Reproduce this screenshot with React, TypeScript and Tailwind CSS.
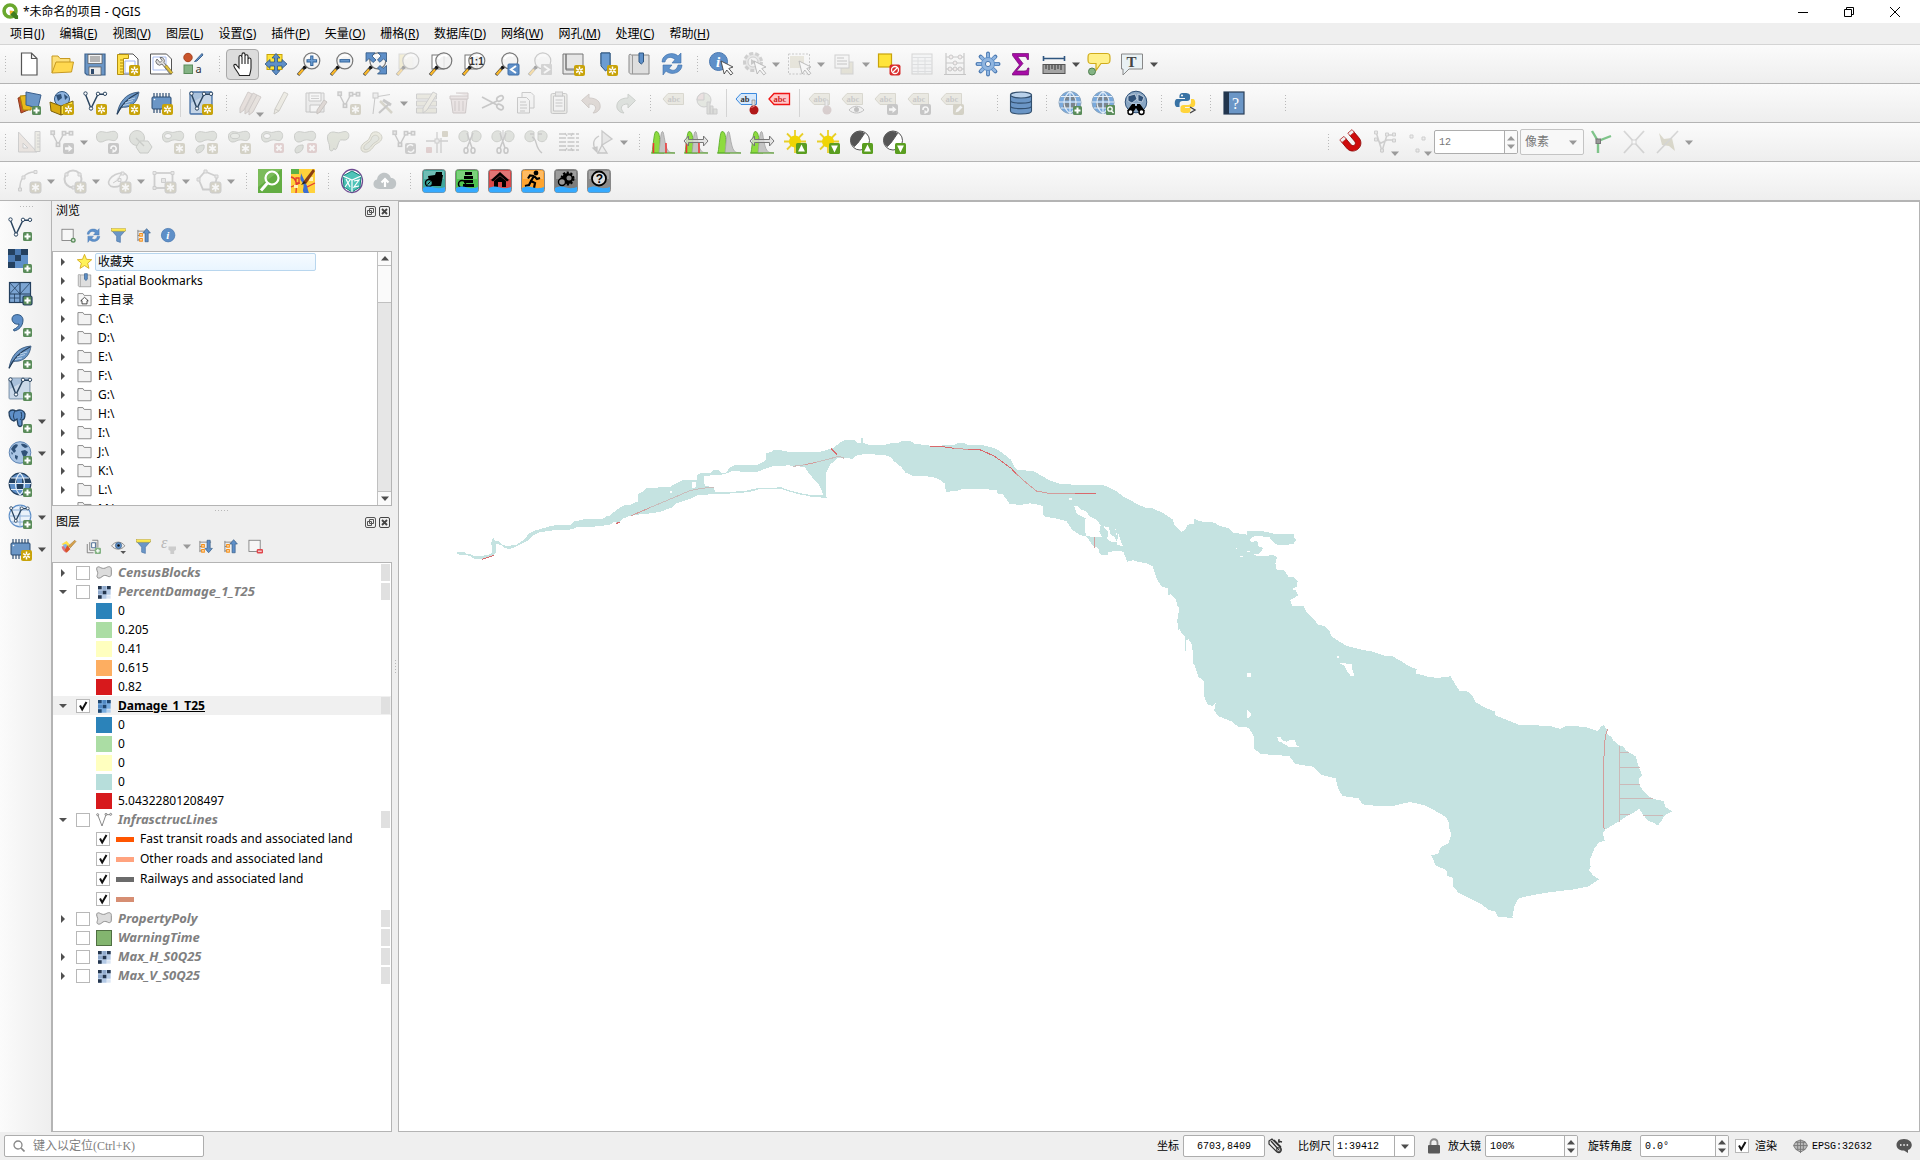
import React from "react";

type IconMap = Record<string, React.ReactNode>;

/* ---------- badges laid over the lower right of an icon ---------- */
const starBadge = (
  <g>
    <rect x="13" y="13" width="11" height="11" rx="2" fill="#c8a30a" />
    <path d="M18.5 14.6v7.8M15.1 16.6l6.8 3.9M21.9 16.6l-6.8 3.9" stroke="#fff" strokeWidth="1.5" />
    <circle cx="18.5" cy="18.5" r="1" fill="#c8a30a" />
  </g>
);
const greyStar = (
  <g>
    <rect x="13" y="13" width="11" height="11" rx="2" fill="#9d9676" />
    <path d="M18.5 14.6v7.8M15.1 16.6l6.8 3.9M21.9 16.6l-6.8 3.9" stroke="#fff" strokeWidth="1.7" />
  </g>
);
const plusBadge = (
  <g>
    <rect x="15" y="15" width="9" height="9" rx="1.5" fill="#5a8c5a" />
    <path d="M19.5 16.5v6M16.5 19.5h6" stroke="#fff" strokeWidth="2" />
  </g>
);
const arrowBadge = (
  <g>
    <rect x="13" y="13" width="11" height="11" rx="2" fill="#777" />
    <path d="M15 17.3h3.5v-2.3l4 3.5-4 3.5v-2.3H15z" fill="#fff" />
  </g>
);
const turnBadge = (
  <g>
    <rect x="13" y="13" width="11" height="11" rx="2" fill="#777" />
    <path d="M16 19a2.6 2.6 0 1 1 3.6 2" stroke="#fff" strokeWidth="1.6" fill="none" />
    <path d="M17.6 18.8l3.2 2.6-3.4 1.6z" fill="#fff" />
  </g>
);
const crossBadge = (
  <g>
    <rect x="14" y="13" width="10" height="10" rx="2" fill="#c09090" />
    <path d="M16.5 15.5l5 5M21.5 15.5l-5 5" stroke="#fff" strokeWidth="2" />
  </g>
);
const upBadge = (
  <g>
    <rect x="13" y="13" width="11" height="11" rx="1.5" fill="#5a9e20" />
    <path d="M18.5 14.5l3.4 7h-6.8z" fill="#fff" />
  </g>
);
const downBadge = (
  <g>
    <rect x="13" y="13" width="11" height="11" rx="1.5" fill="#5a9e20" />
    <path d="M18.5 22.5l3.4-7h-6.8z" fill="#fff" />
  </g>
);

/* ---------- shared shapes ---------- */
const lens = (
  <g>
    <path d="M1 23l7-8" stroke="#444" strokeWidth="3.2" />
    <path d="M1.6 22.4L6 17.4" stroke="#fbb829" strokeWidth="2.2" />
    <circle cx="8" cy="15.2" r="1.8" fill="#111" />
    <circle cx="14.8" cy="8.8" r="8" fill="#f2f2f2" fillOpacity=".85" stroke="#777" strokeWidth="1.2" />
    <path d="M9.5 7a6 6 0 0 1 9-2.500" stroke="#fff" strokeWidth="2" fill="none" />
  </g>
);
const vee = (
  <g fill="none" stroke="#2b4560" strokeWidth="1.5">
    <path d="M2.500 3.500L8 17.500 15 3.200h7" />
    <circle cx="2.500" cy="2.500" r="1.7" fill="#fff" strokeWidth="1" />
    <circle cx="8" cy="17.500" r="1.7" fill="#fff" strokeWidth="1" />
    <circle cx="15" cy="2.800" r="1.7" fill="#fff" strokeWidth="1" />
    <circle cx="22" cy="2.800" r="1.7" fill="#fff" strokeWidth="1" />
  </g>
);
const greyVee = (
  <g fill="none" stroke="#777" strokeWidth="1.400">
    <path d="M2.500 3.500L8 14.500 14 3.200h7" />
    <rect x="1" y="1" width="3.400" height="3.400" fill="#ccc" />
    <rect x="6.300" y="13" width="3.400" height="3.400" fill="#ccc" />
    <rect x="12.300" y="1.500" width="3.400" height="3.400" fill="#ccc" />
    <rect x="19.300" y="1.500" width="3.400" height="3.400" fill="#ccc" />
  </g>
);
const blob = (
  <path
    d="M1.500 7C1 2.500 5 .8 9 2c4 1.500 6-1 10-.7 4 .4 4.500 5 2.500 8-2 2.500-5 .6-8 .5-4 0-5 2.700-8.500 2.200C2.500 11.500 1.700 9.500 1.500 7z"
    fill="#b4bbae"
    stroke="#7c8178"
  />
);
const feather = (
  <g>
    <path d="M1 23C3 12 9 2 23 1c-1 7-4 13-12 15-3 .5-5 0-6 1z" fill="#6b96c6" stroke="#2f4f73" strokeWidth=".8" />
    <path d="M1 23.500C5 14 12 7 22 2" stroke="#243b55" strokeWidth="1.100" fill="none" />
    <path d="M9 12l8-2.500M12 9l7-2M7 14.500l7-1.500" stroke="#c4d8ec" strokeWidth=".9" />
  </g>
);
const chip = (
  <g>
    <path d="M5 2v20M8 2v20M11 2v20M14 2v20M17 2v20M20 2v12" stroke="#2f4f73" strokeWidth="1.200" />
    <rect x="3" y="6" width="19" height="12" rx="1" fill="#6b96c6" stroke="#2b4a70" />
    <circle cx="5.500" cy="8.500" r=".8" fill="#fff" />
  </g>
);
const globe = (
  <g>
    <circle cx="12" cy="11.500" r="11" fill="#79a9dc" stroke="#8ba5be" />
    <path d="M6 4.500h5v5H6zM13 4.500h5v5h-5zM5 12h6v5H5zM13 12h6v5h-6z" fill="#7b858f" />
    <path d="M1 11h22M3 5.500h18M3 17h18M12 .5v22M12 .5c-8 6-8 16 0 22M12 .5c8 6 8 16 0 22" stroke="#e4eef8" strokeWidth="1.100" fill="none" />
  </g>
);
const earth = (
  <g>
    <circle cx="12" cy="11.500" r="10.800" fill="#a8c4e4" stroke="#5f86b4" />
    <path d="M5 5c2-2 4-2 5-1L9 6 7 8l1 2-2 2-3-4zM13 3c3-1 6 1 7 3l-3 1-3-2zM13 10l4-1 3 2-2 4-2 2-2-4zM7 14l3 1-1 4-2-2zM3 11l2 1-1 2z" fill="#2f5178" />
  </g>
);
const tag = <path d="M1 8l5-5.500h15.500v11H6z" fill="#d3d0bd" stroke="#a39f88" />;
const abc = (
  <text x="5.500" y="11.300" fontSize="8.500" fontFamily="Liberation Serif" fontWeight="700" fill="#777">
    abc
  </text>
);
const histogram = (
  <g>
    <path d="M1 23C2.500 14 3 1.500 5 1.500c3 0 3.500 4 4 10 .5 5 1 10 4 11.500z" fill="#8edb3f" stroke="#5cae2b" strokeWidth=".9" />
    <path d="M8 23c1-8 1.500-21.500 3.500-21.500 2 0 2 19 7.500 20.800L24 23z" fill="#c4c4c4" stroke="#999" strokeWidth=".7" />
    <path d="M0 23h24" stroke="#5cae2b" />
  </g>
);
const redMarks = <path d="M2.500 13v10M15 13v10" stroke="#e33" strokeWidth="1.500" />;
const stretch = <path d="M0 11l4.500-5v3.500h15V6l4.500 5-4.500 5v-3.500h-15V16z" fill="#ddd" fillOpacity=".75" stroke="#777" strokeWidth="1" />;
const sun = (
  <g>
    <path d="M12 0v23M1 11.500h22M4 3.500l16 16M20 3.500l-16 16" stroke="#e8cf2a" strokeWidth="1.800" />
    <circle cx="12" cy="11.500" r="6" fill="#f0d505" />
  </g>
);
const contrast = (
  <g>
    <circle cx="11" cy="10.500" r="9.500" fill="#fff" stroke="#555" />
    <path d="M15.500 3.500A8.200 8.200 0 0 0 5 16.500C8 15 11 10 15.500 3.500z" fill="#555" stroke="#555" />
  </g>
);
const scissors = (
  <g fill="none" stroke="#777" strokeWidth="1.500">
    <path d="M9 3l5 15M15 3l-6 15" />
    <ellipse cx="8" cy="20.500" rx="2" ry="2.800" />
    <ellipse cx="15" cy="20.500" rx="2" ry="2.800" />
  </g>
);
const lobes = (
  <g fill="#b4bbae" stroke="#858a80">
    <path d="M10 2C6-1 0 2 1 8c1 4 6 5 9 2z" />
    <path d="M14 2c4-3 10 0 9 5-1 5-6 6-9 3z" />
  </g>
);
const cursor = <path d="M12 9l3.200 13 2.600-4 4 5 2-1.700-4-4.800 4.200-1.500z" fill="#fff" stroke="#444" strokeWidth=".9" />;
const table = (
  <g>
    <rect x="2" y="2" width="20" height="20" fill="#eef0f2" stroke="#999" />
    <path d="M2 5.500h20M2 9h20M2 12.500h20M2 16h20M2 19.500h20M8 5v17M15 5v17" stroke="#b4b8bc" />
  </g>
);
const waterTile = (fill: string, inner: React.ReactNode) => (
  <g>
    <rect x=".5" y=".5" width="23" height="23" rx="3" fill={fill} stroke="#888" />
    <path d="M2 2h20v8H2z" fill="#fff" opacity=".25" />
    {inner}
    <path d="M1 19c4-2 7-2 11-.5 4 1 7 1 11-.5v3.500a2 2 0 0 1-2 2H3a2 2 0 0 1-2-2z" fill="#35aaff" />
  </g>
);
const refresh = (
  <g fill="#5f92cc" stroke="#3f6ea8" strokeWidth=".6">
    <path d="M2 10C2 2 13-1 18 4l3-3v10H12l3-3.500C11 4 6 5 5 10z" />
    <path d="M22 13c0 8-11 11-16 6l-3 4V13h9l-3 3.500c4 3.500 8 1.500 9-3.500z" />
  </g>
);
const info = (
  <g>
    <circle cx="9.500" cy="9.500" r="9" fill="#5e8fc8" stroke="#4a78b0" />
    <text x="7" y="15" fontSize="15" fontStyle="italic" fontWeight="700" fontFamily="Liberation Serif" fill="#fff">
      i
    </text>
  </g>
);
const tree = (
  <g>
    <path d="M3 3v18M3 5h18M3 12h4M3 19h4" stroke="#777" strokeWidth="1.300" fill="none" />
    <rect x="6" y="9" width="4" height="4" fill="#fff" stroke="#f58a0b" strokeWidth="1.800" />
    <rect x="6" y="17" width="4" height="4" fill="#fff" stroke="#f58a0b" strokeWidth="1.800" />
  </g>
);
const funnel = (
  <g>
    <path d="M1 4h22l-8 9v10l-6-2v-8z" fill="#6b96c6" stroke="#4a73a6" />
    <rect x="1" y="1" width="22" height="4" fill="#fde94c" stroke="#b9a22c" strokeWidth=".8" />
  </g>
);

const icons: IconMap = {
  new: <path d="M4.500 1h10l5.500 5.500V23H4.500zM14.500 1v5.500H20" fill="#fff" stroke="#555" strokeWidth="1.200" />,
  open: (
    <g stroke="#c79a22">
      <path d="M2 21V4h6l2 2.500h10V10" fill="#fde07a" />
      <path d="M2 21l4-11h17.500l-2 10z" fill="#ffd84f" />
    </g>
  ),
  save: (
    <g>
      <path d="M2 2h20v21H4l-2-2z" fill="#6b96c6" stroke="#3f648f" strokeWidth="1.200" />
      <rect x="5" y="2.500" width="14" height="9" fill="#f4f4f4" stroke="#555" strokeWidth=".7" />
      <path d="M7 5h10M7 7h10M7 9h10" stroke="#777" />
      <rect x="6" y="15" width="12" height="8" fill="#ececec" stroke="#555" strokeWidth=".7" />
      <rect x="8" y="17" width="3" height="5" fill="#2f4a6c" />
    </g>
  ),
  newLayout: (
    <g>
      <path d="M3 2h14l5 5v15H3z" fill="#fff" stroke="#555" />
      <path d="M1.500 2.500h11v4h-5v16h-6z" fill="#ffe04a" stroke="#b38f10" />
      <path d="M4 8h3M4 11h3M4 14h3M4 17h3M4 20h3" stroke="#b38f10" />
      <path d="M9 9h10v12H9z" fill="none" stroke="#9fb4f0" />
      {starBadge}
    </g>
  ),
  layouts: (
    <g>
      <path d="M1.500 2h16l5 5v15h-21z" fill="#fff" stroke="#555" />
      <path d="M4 5h13v13H4z" fill="none" stroke="#a8bcf0" />
      <path d="M8 7a3.500 3.500 0 0 0 5 5l8 10 2-1.500-8-10a3.500 3.500 0 0 0-4-5l2 3-2 2z" fill="#ddd" stroke="#666" strokeWidth=".9" />
      <path d="M15.500 14.500l6.500 7.500 1.800-1.500-6-7.500z" fill="#e2c23c" stroke="#7a6a2a" strokeWidth=".6" />
    </g>
  ),
  style: (
    <g>
      <circle cx="6" cy="5.500" r="4.200" fill="#c9542b" stroke="#a84320" />
      <path d="M12.500 9.500L20 1.500l1 1.500-6 6z" fill="#5e8fc8" stroke="#3f648f" />
      <rect x="2" y="13" width="8.500" height="8.500" fill="#84b384" stroke="#5a8c5a" />
      <text x="13.500" y="21" fontSize="11" fontFamily="Noto Sans" fill="#333">a</text>
    </g>
  ),
  hand: (
    <path
      d="M7.500 23.500C6 20 2 16 1.800 13.500c.2-1.500 2-1.500 3 0L7 16V5c0-2 2.600-2 2.800 0L10 2.500c0-2.200 3-2.200 3 0V4c.3-1.800 3-1.600 3 .3V7c.5-1.500 3-1.300 3 .8V16c0 3-1 5-1.500 7.500zM10 5v7M13 4v8M16 6v6"
      fill="#fff"
      stroke="#222"
      strokeWidth="1.100"
      transform="translate(1 0)"
    />
  ),
  pan: (
    <g>
      <rect x="3" y="2.500" width="15" height="15" fill="#ffe43a" stroke="#c8a30a" />
      <path
        d="M12 1.500l4 4.500h-2.500v4H18V7.500l5 4.500-5 4.500V14h-4.500v4.500H16L12 23l-4-4.500h2.500V14H6v2.500L1 12l5-4.500V10h4.500V6H8z"
        fill="#5e8fc8"
        stroke="#2f5680"
        strokeWidth=".8"
      />
    </g>
  ),
  zoomIn: <g>{lens}<path d="M14.800 3.500v10.600M9.500 8.800h10.600" stroke="#33659c" strokeWidth="3.200" /><path d="M14.800 4.500v8.600M10.500 8.800h8.600" stroke="#6b9cd2" strokeWidth="1.400" /></g>,
  zoomOut: <g>{lens}<path d="M9.500 8.800h10.600" stroke="#33659c" strokeWidth="3.400" /><path d="M10.500 8.800h8.600" stroke="#6b9cd2" strokeWidth="1.400" /></g>,
  zoomFull: (
    <g>
      {lens}
      <path d="M3 .8h9L9 4l4 4-3 2.500-4-4-3 3zM23.500.8v9l-3-3-3.500 3.500L14.500 8l3.500-4-3-3.200zM23.500 22h-9l3-3-3-3 2.500-2.500 3 3 3.500-3z" fill="#5e8fc8" stroke="#2f5680" strokeWidth=".8" />
    </g>
  ),
  zoomSel: <g><rect x="3" y="2" width="14" height="15" fill="#e9dc9a" stroke="#aaa" />{lens}</g>,
  zoomLayer: <g><rect x="3" y="3" width="12" height="14" fill="#fff" stroke="#777" />{lens}</g>,
  zoomNative: (
    <g>
      <rect x="3" y="3" width="12" height="14" fill="#fff" stroke="#777" />
      {lens}
      <text x="7.300" y="12.500" fontSize="10" fontWeight="700" fontFamily="Liberation Sans" fill="#333">1:1</text>
    </g>
  ),
  zoomLast: <g>{lens}<rect x="13" y="12" width="11" height="11" rx="1" fill="#5e8fc8" stroke="#3f6ea8" /><path d="M21 14l-5 3.500 5 3.500" stroke="#fff" strokeWidth="2" fill="none" /></g>,
  zoomNext: <g>{lens}<rect x="13" y="12" width="11" height="11" rx="1" fill="#999" /><path d="M16 14l5 3.500-5 3.500" stroke="#fff" strokeWidth="2" fill="none" /></g>,
  mapView: <g><path d="M5 2h17v15H5zM5 2H2v20h15v-4H5z" fill="#e6e6e6" stroke="#777" />{starBadge}</g>,
  bookNew: <g><path d="M7 1h9v17l-4.500-3.500L9 12H7z" fill="#5e8fc8" stroke="#2f5680" /><path d="M7 1h9v14l-4.500 4L7 14z" fill="#6b9cd2" stroke="#2f5680" />{starBadge}</g>,
  bookmarks: (
    <g>
      <path d="M2 3.500C2 2 4 2 4.500 3H22v19H4.500C3 22 2 21 2 20z" fill="#dedede" stroke="#888" />
      <path d="M5.500 3v19" stroke="#999" />
      <path d="M12 1h4.500v9l-2.200 2-2.300-2z" fill="#5e8fc8" stroke="#2f5680" />
    </g>
  ),
  refresh,
  identify: <g>{info}{cursor}</g>,
  info: <g transform="scale(1.200)">{info}</g>,
  action: (
    <g>
      <circle cx="11" cy="10" r="8.500" fill="#ccc" stroke="#888" strokeWidth="3" strokeDasharray="4 2" />
      <circle cx="11" cy="10" r="5" fill="#eee" stroke="#888" />
      <path d="M9 7l5 3-5 3z" fill="#777" />
      {cursor}
    </g>
  ),
  select: <g><rect x="1.500" y="2" width="21" height="20" fill="none" stroke="#777" strokeDasharray="2 1.500" /><rect x="3" y="4" width="14" height="12" fill="#cdc7ad" />{cursor}</g>,
  selectForm: <g><rect x="9" y="10" width="12" height="12" fill="#c9c3a5" stroke="#999" /><rect x="3" y="3" width="14" height="13" fill="#f2f2f2" stroke="#888" /><path d="M5 6h7M5 9h10M5 12h10" stroke="#999" strokeWidth="1.300" /></g>,
  deselect: (
    <g>
      <rect x="1.500" y="2" width="13" height="13" fill="#ffe43a" stroke="#c8a30a" strokeWidth="1.200" />
      <rect x="12.500" y="12.500" width="11" height="11" rx="2" fill="#d82c2c" />
      <circle cx="18" cy="18" r="3.500" fill="none" stroke="#fff" strokeWidth="1.300" />
      <path d="M15.500 20.500l5-5" stroke="#fff" strokeWidth="1.300" />
    </g>
  ),
  table,
  abacus: (
    <g fill="none" stroke="#777">
      <path d="M3 1v21M21 1v21M1 22.500h22M3 5h18M3 11h18M3 17h18" strokeWidth="1.200" />
      <g fill="#e9dada"><circle cx="8" cy="5" r="2" /><circle cx="17" cy="5" r="2" /><circle cx="7" cy="17" r="2" /><circle cx="12" cy="17" r="2" /><circle cx="17" cy="17" r="2" /><circle cx="12" cy="11" r="2" /></g>
    </g>
  ),
  gear: (
    <g>
      <path d="M12 1.500v21M1.500 12h21M4.600 4.600l14.800 14.800M19.400 4.600L4.600 19.400" stroke="#4a78b0" strokeWidth="4" strokeLinecap="round" />
      <path d="M12 2v20M2 12h20M5 5l14 14M19 5L5 19" stroke="#8fb5e0" strokeWidth="2.500" strokeLinecap="round" />
      <circle cx="12" cy="12" r="6.500" fill="#8fb5e0" stroke="#5e8fc8" />
      <circle cx="12" cy="12" r="2.600" fill="#f5f5f5" stroke="#4a78b0" />
    </g>
  ),
  sigma: <path d="M3.500 1.500h16v6h-1.200c-.4-2-1-3-3-3H8.500L14 11.500 7.500 19H15c2.500 0 3.200-1 3.800-3H20l-.6 7H3.500v-1.500l7-8.500-7-9.500z" fill="#a60ca6" stroke="#6e086e" strokeWidth=".7" />,
  measure: (
    <g>
      <path d="M1.500 6.500h21M1.500 4v5M22.500 4v5" stroke="#2f5680" strokeWidth="1.600" />
      <rect x="1" y="12.500" width="22" height="9" fill="#a4a4a4" stroke="#555" />
      <path d="M4 13v4M7 13v5M10 13v4M13 13v5M16 13v4M19 13v5" stroke="#333" />
    </g>
  ),
  mapTip: <g><path d="M4 1.500h16c3 0 3 2 3 5s0 5-3 5h-6l-5 7v-7H4c-3 0-3-2-3-5s0-5 3-5z" fill="#fff08a" stroke="#d0ac1c" strokeWidth="1.200" /><circle cx="5" cy="19.500" r="3.500" fill="#84b384" stroke="#4f7f4f" /></g>,
  textNote: <g><path d="M1.500 2h21v15H9l-6 6v-6H1.500z" fill="#e9f1f4" stroke="#888" /><text x="6.500" y="15" fontSize="15" fontFamily="Liberation Serif" fontWeight="700" fill="#444">T</text></g>,

  dataSource: (
    <g>
      <path d="M1 7l4-1 6 13-7 3z" fill="#c9542b" stroke="#8d3a1d" />
      <path d="M3 5l12-1-1 15-8 0z" fill="#e9b91b" stroke="#a8830a" />
      <path d="M9 1l15 3-3 13-12-3z" fill="#6b96c6" stroke="#3a5f8c" />
      {plusBadge}
    </g>
  ),
  geopackage: (
    <g>
      <circle cx="12" cy="8" r="7.500" fill="#8db3df" stroke="#2f5680" />
      <path d="M6 4l5-1 1 4-4 3zM14 3l4 3-3 3z" fill="#2f5178" />
      <path d="M0 11l11 4v9L1 20z" fill="#d9aa12" stroke="#7d610a" />
      <path d="M11 15l12-5v9l-12 5z" fill="#ffe43a" stroke="#7d610a" />
      {starBadge}
    </g>
  ),
  shapeNew: <g>{vee}{starBadge}</g>,
  spatialite: <g>{feather}{starBadge}</g>,
  memory: <g>{chip}{starBadge}</g>,
  virtual: <g><rect x="1" y="1" width="22" height="22" rx="1" fill="#a9c1dc" stroke="#4a73a6" strokeWidth="1.300" /><path d="M2 12L20 2h2v20H2z" fill="#d8e3ef" opacity=".6" />{vee}{starBadge}</g>,
  pencils: (
    <g stroke="#8b7d78">
      <path d="M2 17L10 1l4 2-8 16-4 3z" fill="#cdb9b0" />
      <path d="M7 18l8-16 4 2-8 16-4 3z" fill="#c0b2aa" />
      <path d="M11 19l8-15 4 2-8 15-4 3z" fill="#cdbfb5" />
    </g>
  ),
  pencil: <path d="M4 18L13 1l4 2L8 20l-5 3zM4 18l4 2" fill="#ddd8c4" stroke="#8b8778" />,
  saveEdits: <g><path d="M2 2h18v19H2z" fill="#ddd" stroke="#777" /><path d="M5 2h12v8H5zM6 14h10v7H6z" fill="#f6f6f6" stroke="#777" /><path d="M7 5h8M7 7.500h8" stroke="#888" /><path d="M13 19l7-10 3 2-7 10-3 2z" fill="#b8a79d" stroke="#7a6e68" /></g>,
  addFeature: <g>{greyVee}{greyStar}</g>,
  vertexTool: <g stroke="#777" fill="none"><path d="M3 23L5 6 20 3.500" /><rect x="3" y="2" width="5" height="5" fill="#ddd" /><path d="M10 10l12 12" strokeWidth="2.500" stroke="#a39d83" /><path d="M20 12L9 22" strokeWidth="2" /><path d="M13 9l8 5" strokeWidth="3" /></g>,
  multiEdit: <g stroke="#888"><path d="M1.500 3h20v5h-20zM1.500 10h20v5h-20zM1.500 17h20v5h-20z" fill="#d1ceb8" /><path d="M8 17L18 1l4 2-10 16-4 3z" fill="#ddd8c4" /></g>,
  trash: <g stroke="#8b7b7b" fill="#d6c6c6"><path d="M3 8h16l-1.500 14H5z" /><path d="M2 5h18v3H2zM8 2h12v3" /><path d="M7 10v10M11 10v10M15 10v10" /></g>,
  cut: <g fill="none" stroke="#777" strokeWidth="1.600"><path d="M1 6l15 8M1 17L16 10" /><ellipse cx="19" cy="7.500" rx="3.500" ry="2.300" transform="rotate(-30 19 7.500)" /><ellipse cx="19" cy="16" rx="3.500" ry="2.300" transform="rotate(30 19 16)" /></g>,
  copy: <g fill="#eee" stroke="#777"><path d="M8 1.500h9l3 3V17H8z" /><path d="M3.500 6.500h9l3 3V22h-12z" /><path d="M6 11h6M6 14h7M6 17h7M6 20h5" /></g>,
  paste: <g fill="#eee" stroke="#777"><rect x="4" y="2.500" width="16" height="20" rx="1.500" fill="#d8d8d0" /><path d="M6.500 5h11v15h-11z" /><rect x="8.500" y="1" width="7" height="4" fill="#ccc" /><path d="M8.500 9h7M8.500 12h7M8.500 15h7" /></g>,
  undo: <path d="M1.500 9.500L9 3v4c8 0 12 4 11 10-1 3-4 5-7 5 4-4 4-9-4-9v4z" fill="#b8a89e" stroke="#8f8078" />,
  redo: <path d="M22.500 9.500L15 3v4C7 7 3 11 4 17c1 3 4 5 7 5-4-4-4-9 4-9v4z" fill="#b3bdb3" stroke="#838c83" />,
  label: <g>{tag}{abc}</g>,
  diagram: <g stroke="#888"><circle cx="9" cy="9" r="7" fill="#c5cdbd" /><path d="M9 9V2a7 7 0 0 0-7 7z" fill="#d4b8b8" /><path d="M12 11h3v12h-3zM15 15h3v8h-3zM18 18h4v5h-4z" fill="#b5b8b0" /></g>,
  labelPin: (
    <g>
      <path d="M1 8l5-5.500h15.500v11H6z" fill="#d6e8fb" stroke="#3c8ade" />
      <text x="5.500" y="11.300" fontSize="8.500" fontFamily="Liberation Serif" fontWeight="700" fill="#333">ab</text>
      <path d="M17 9h3v8h-3z" fill="#ddd" stroke="#777" strokeWidth=".6" />
      <circle cx="19" cy="19" r="4.500" fill="#b11818" />
      <path d="M16.500 17a3 3 0 0 1 3-1.500" stroke="#e88" fill="none" />
    </g>
  ),
  labelRed: (
    <g>
      <path d="M1 8l5-5.500h15.500v11H6z" fill="#ffc9c9" stroke="#f01414" strokeWidth="1.300" />
      <text x="5.500" y="11.300" fontSize="8.500" fontFamily="Liberation Serif" fontWeight="700" fill="#c22">abc</text>
    </g>
  ),
  labelPin2: <g>{tag}{abc}<path d="M17 9h3v8h-3z" fill="#ddd" stroke="#888" /><circle cx="19" cy="19" r="4.500" fill="#a98d8d" /></g>,
  labelEye: <g>{tag}{abc}<path d="M8 19c4-5 11-5 15 0-4 4-11 4-15 0z" fill="#eee" stroke="#666" /><circle cx="15.500" cy="18.500" r="2.500" fill="#666" /></g>,
  labelMove: <g>{tag}{abc}{arrowBadge}</g>,
  labelTurn: <g>{tag}{abc}{turnBadge}</g>,
  labelEdit: <g>{tag}{abc}<rect x="13" y="13" width="11" height="11" rx="2" fill="#9d9676" /><path d="M15.500 21.500l1-3 4-4 2 2-4 4z" fill="#fff" /></g>,
  db: (
    <g fill="#6b96c6" stroke="#33506f" strokeWidth="1.100">
      <path d="M1.500 4v16c0 4 21 4 21 0V4z" />
      <path d="M1.500 9.500c0 3.500 21 3.500 21 0M1.500 15c0 3.500 21 3.500 21 0" fill="none" />
      <ellipse cx="12" cy="4" rx="10.500" ry="3" fill="#b9d1ea" />
    </g>
  ),
  globePlus: <g>{globe}{plusBadge}</g>,
  globeFind: <g>{globe}<rect x="15" y="14" width="9" height="10" rx="1" fill="#5a8c5a" /><circle cx="19" cy="18" r="2.200" fill="none" stroke="#fff" strokeWidth="1.300" /><path d="M20.500 20l2 2" stroke="#fff" strokeWidth="1.400" /></g>,
  metasearch: (
    <g>
      <circle cx="12" cy="11" r="10.800" fill="#8aa7c4" stroke="#2f5178" />
      <path d="M4 5l7-2 2 5-5 4-4-2zM14 3l6 3-2 5-4-1zM7 13h10" fill="#2f5178" stroke="#dfe8f2" strokeWidth=".7" />
      <path d="M8 13h3v2h2v-2h3l5 7h-7l-2-3-2 3H3z" fill="#000" />
      <circle cx="6.500" cy="21" r="2.500" fill="#fff" stroke="#000" strokeWidth="1.400" />
      <circle cx="17.500" cy="21" r="2.500" fill="#fff" stroke="#000" strokeWidth="1.400" />
    </g>
  ),
  python: (
    <g>
      <path d="M11 2c-5 0-4.500 2-4.500 5H12v1H4c-3 0-3 8 0 8h2.500v-3c0-2 1-3 3-3h4.500c2 0 3-1 3-2.500V4.500C17 2.500 14 2 11 2z" fill="#3872a4" />
      <path d="M13 22c5 0 4.500-2 4.500-5H12v-1h8c3 0 3-8 0-8h-2v3c0 2-1 3-3 3h-4.500c-2 0-3 1-3 2.500v3C7.500 21.500 10 22 13 22z" fill="#ffd43b" />
      <circle cx="9" cy="4.500" r="1" fill="#fff" />
      <path d="M17 16l5 3-5 3" stroke="#444" strokeWidth="1.400" fill="none" />
    </g>
  ),
  help: (
    <g>
      <rect x="2" y="1" width="20" height="22" fill="#6b96c6" stroke="#2a3f58" strokeWidth="1.200" />
      <rect x="2" y="1" width="5" height="22" fill="#22364e" />
      <text x="10" y="18" fontSize="16" fontFamily="Liberation Serif" fill="#fff">?</text>
    </g>
  ),

  cad: <g fill="#d7c8bd" stroke="#888"><path d="M1.500 2v20H20z" /><path d="M6 13v5h5z" fill="#f5f5f5" /><path d="M18 1.500h5v20h-5z" fill="#d8d6c4" /><path d="M20 5h3M20 8h3M20 11h3M20 14h3M20 17h3" /></g>,
  moveFeature: <g>{greyVee}{arrowBadge}</g>,
  rotateFeature: <g>{blob}{turnBadge}</g>,
  scaleFeature: <g fill="#b4bbae" stroke="#7c8178"><circle cx="9" cy="8" r="7.500" /><path d="M12 11h8l4 6-4 6h-8l-4-6z" fill="#c4cabf" /><path d="M8 8l8 8" strokeWidth="1.400" /></g>,
  addRing: <g>{blob}<ellipse cx="7" cy="6" rx="3.500" ry="2.500" fill="#f5f5f5" stroke="#7c8178" />{greyStar}</g>,
  addPart: <g>{blob}<path d="M2 21c0-4 3-6 8-6 1 4-2 8-7 8z" fill="#b4bbae" stroke="#7c8178" />{greyStar}</g>,
  fillRing: <g>{blob}<ellipse cx="8" cy="6" rx="4.500" ry="2.700" fill="#cdd3c8" stroke="#7c8178" />{greyStar}</g>,
  delRing: <g>{blob}<ellipse cx="7" cy="6" rx="3.500" ry="2.500" fill="#f5f5f5" stroke="#7c8178" />{crossBadge}</g>,
  delPart: <g>{blob}<path d="M2 21c0-4 3-6 8-6 1 4-2 8-7 8z" fill="#b4bbae" stroke="#7c8178" />{crossBadge}</g>,
  reshape: <path d="M1.500 8C1 3 6 1 10 2.500c4 1 6-1 9-1 4 0 5 5 2.500 7.500-2 2-5 .500-7 1-1.500 1-2 3-3 6-1 4-3 5-3.500 2-1 4-5 4-4.500-1C3.500 13 1.500 12 1.500 8z" fill="#b9bfa8" stroke="#7c8178" />,
  offset: <g stroke="#8d8d75"><path d="M13 3c4-3 10 0 10 5-1 5-6 5-8 8-3 5-8 8-12 5-3-4 1-8 5-10 3-2 3-6 5-8z" fill="#d2d0b4" /><path d="M14 6c3-2 6 0 6 3-1 3-5 3-7 6-2 3-5 6-8 4-1-3 2-5 5-7 3-2 2-5 4-6z" fill="#c2c8b8" /></g>,
  reverse: <g>{greyVee}<rect x="13" y="13" width="11" height="11" rx="2" fill="#888" /><path d="M15 17.500a3.500 3.500 0 0 1 6-1.500M22 19.500a3.500 3.500 0 0 1-6 1.500" stroke="#fff" strokeWidth="1.400" fill="none" /></g>,
  trim: <g stroke="#888" fill="none"><path d="M1 11h22M12 2v21M16 8v15" strokeWidth="1.300" /><rect x="10" y="9" width="4" height="4" fill="#ddd" /><rect x="17" y="1" width="6" height="6" rx="1" fill="#9d9676" stroke="none" /><rect x="1" y="17" width="6" height="6" rx="1" fill="#c09090" stroke="none" /></g>,
  split: <g>{lobes}{scissors}</g>,
  splitParts: <g>{lobes}{scissors}<path d="M12 0v8" stroke="#777" /></g>,
  merge: <g>{lobes}<path d="M6 4h4M14 4h4M8 7c6 2 2 10 10 16" stroke="#777" strokeWidth="1.400" fill="none" /></g>,
  mergeAttr: <g stroke="#777" fill="none" strokeWidth="1.300"><path d="M2 4h20M2 8h20M2 12h20M2 16h20M2 20h20" strokeDasharray="7 1.500" /><path d="M8 3l2 3M16 3l-2 3M8 21l2-3M16 21l-2-3" /></g>,
  rotateSym: <g stroke="#777" fill="none" strokeWidth="1.300"><path d="M9 6C3 9 2 15 6 20" /><path d="M3 18l4 4V17z" fill="#888" /><path d="M12 1l10 8-10 6z" fill="#ccc" /><path d="M12 15l5 8H8z" fill="#e4e4e4" /></g>,
  histLocal: <g>{histogram}{redMarks}</g>,
  histLocalWide: <g>{histogram}{redMarks}{stretch}</g>,
  hist: histogram,
  histWide: <g>{histogram}{stretch}</g>,
  brighter: <g>{sun}{upBadge}</g>,
  darker: <g>{sun}{downBadge}</g>,
  contrastUp: <g>{contrast}{upBadge}</g>,
  contrastDown: <g>{contrast}{downBadge}</g>,
  magnet: (
    <g transform="rotate(-40 12 12)">
      <path d="M4 5v8c0 11 16 11 16 0V5h-5.500v8c0 4-5 4-5 0V5z" fill="#cf0c0c" stroke="#8c0808" strokeWidth=".8" />
      <path d="M4 2.500h5.500V6H4zM14.500 2.500H20V6h-5.500z" fill="#eee" stroke="#b33" strokeWidth=".8" />
    </g>
  ),
  snapVertex: <g stroke="#888" fill="#ccc"><path d="M3 2l6 19 5-16h7M3 9l5 4 6-3h7" fill="none" strokeWidth="1.500" /><path d="M1.500 1h3v3h-3zM1.500 8h3v3h-3zM7.500 19h3v3h-3zM12.500 3h3v3h-3zM19.500 3h3v3h-3zM19.500 9h3v3h-3z" /></g>,
  snapDots: <g stroke="#888" fill="#ddd"><path d="M4 5h3v3H4zM16 7h3v3h-3zM10 19h3v3h-3z" /></g>,
  topo: <g><path d="M3 1l6 10L22 6M9 11v12" stroke="#7fc48a" strokeWidth="2.400" fill="none" /><rect x="7" y="9" width="4.500" height="4.500" fill="#999" stroke="#777" /></g>,
  intersect: <g stroke="#999" strokeWidth="1.800" fill="none"><path d="M2 1l20 22M22 1L2 23" /><rect x="10" y="10" width="4" height="4" fill="#fff" strokeWidth="1" /></g>,
  selfSnap: <g stroke="#999" strokeWidth="1.600" fill="none"><path d="M4 3l5 6 8-1 3 13-6-5-7-1z" fill="#a8a27e" stroke="none" /><path d="M23 1L2 23" /></g>,

  arc: <g stroke="#888" fill="#ccc"><path d="M3 21C2 10 8 3 18 3" fill="none" strokeWidth="1.500" /><path d="M1.500 19h3v3h-3zM5 7h3v3H5zM17 1.500h3v3h-3z" />{greyStar}</g>,
  circle: <g stroke="#888" fill="#ccc"><circle cx="11" cy="10" r="8.500" fill="none" strokeWidth="2" /><path d="M3 4h3v3H3zM16 4h3v3h-3zM10 17h3v3h-3z" />{greyStar}</g>,
  ellipse: <g stroke="#888" fill="#ccc"><ellipse cx="11" cy="11" rx="10" ry="6" transform="rotate(-25 11 11)" fill="none" strokeWidth="1.600" /><path d="M6 14l5-3 4-8M11 9.500h3v3h-3zM14 3h3v3h-3z" fill="#ddd" />{greyStar}</g>,
  rectangle: <g stroke="#888" fill="#ccc"><rect x="2.500" y="4" width="18" height="15" fill="none" strokeWidth="1.800" /><path d="M9.500 9.500h4v4h-4zM1 2.500h3v3H1zM19 2.500h3v3h-3zM1 17.500h3v3H1z" />{greyStar}</g>,
  polygon: <g stroke="#888" fill="#ccc"><path d="M8 2.500l12 5-3 13H6L1.500 10z" fill="none" strokeWidth="1.800" /><path d="M7 1h3v3H7zM18 6h3v3h-3zM0 9h3v3H0z" />{greyStar}</g>,
  osmSearch: (
    <g>
      <rect width="24" height="24" fill="#63ad43" />
      <path d="M0 0h24L0 18z" fill="#8cc66b" opacity=".6" />
      <circle cx="14" cy="9" r="6.500" fill="none" stroke="#fff" strokeWidth="2.200" />
      <path d="M9.500 14L3 21.500" stroke="#fff" strokeWidth="3" />
    </g>
  ),
  osmMap: (
    <g>
      <rect width="24" height="24" fill="#ffd23c" />
      <path d="M0 0h8v5H0z" fill="#5cb046" />
      <path d="M9 2c3 4-2 7 2 11s-1 8 2 11h5c-2-5-1-6-3-9" fill="#3c6ed2" />
      <path d="M0 8c5 1 6 5 5 16M5 9h3v5H5zM0 18l9-4M16 18l8-4" stroke="#e23b30" strokeWidth="1.300" fill="none" />
      <path d="M3 16h4v3H3zM18 8h4v4h-4z" fill="#fff3b8" />
      <path d="M12 13L22 0l2 2-9 13z" fill="#8a3f12" />
      <path d="M10 16l3-4 2 2z" fill="#222" />
    </g>
  ),
  cube: (
    <g>
      <ellipse cx="12" cy="12" rx="10.500" ry="11.500" fill="#fff" stroke="#6e4a90" strokeWidth="1.300" />
      <path d="M12 2l9 5-1 11-8 5-8-5L3 7z" fill="#4fc3b8" stroke="#148278" />
      <path d="M3 7l9 4 9-4M12 11v12M6 10l4 8M10 11l-5 7M14 12l5-1-5 7 5-1" stroke="#fff" strokeWidth="1.200" fill="none" />
    </g>
  ),
  cloud: <g><path d="M6 20C-1 20-1 11 4 10.500 5 3 15 1 18 9c7 0 7 11 0 11z" fill="#bfc4c6" /><path d="M12 18v-7M8.500 13.500L12 10l3.500 3.500" stroke="#fff" strokeWidth="2.200" fill="none" /></g>,
  floodFolder: waterTile("#3fa79c", <g><path d="M6 7l7-1 1-3h6v3h1l-2 11H8z" fill="#000" /><circle cx="7" cy="14" r="3.500" fill="#3fa79c" stroke="#000" strokeWidth="1.400" /><path d="M5.500 15.500l3-3" stroke="#000" /></g>),
  floodData: waterTile("#4fc24f", <g><path d="M10 3h7v3h-7zM9 7h9v3H9zM9 11h9v3H9zM8 15h11v3H8z" fill="#000" /><circle cx="7" cy="15" r="3.500" fill="none" stroke="#000" strokeWidth="1.500" /></g>),
  floodHouse: waterTile("#d84848", <path d="M12 3l9 8-2 1.500-7-6-7 6L3 11zM6 12l6-5 6 5v6h-4v-5h-4v5H6z" fill="#000" />),
  floodRun: waterTile("#ffa42e", <g fill="none" stroke="#000" strokeWidth="2.200"><circle cx="15" cy="4" r="1.300" fill="#000" /><path d="M13 7l-3 5 4 2-1 5M10 12l-2 4-4 1M13 7l-4-.5-2 3M13 7l3 3 3-1" /></g>),
  floodGear: waterTile("#7d7d7d", <g><circle cx="13.500" cy="9.500" r="5.500" fill="#000" stroke="#000" strokeWidth="3" strokeDasharray="2 1.500" /><circle cx="15" cy="9" r="2.500" fill="#8a8a8a" /><circle cx="8" cy="13" r="3.500" fill="#999" stroke="#000" strokeWidth="1.400" /></g>),
  floodHelp: waterTile("#8a8a8a", <g><circle cx="12" cy="9.500" r="7" fill="#ddd" stroke="#000" strokeWidth="1.800" /><text x="8.700" y="14" fontSize="12" fontWeight="700" fontFamily="Liberation Sans" fill="#000">?</text></g>),

  addVector: <g>{vee}{plusBadge}</g>,
  addRaster: (
    <g>
      <rect x="0" y="0" width="20" height="19" fill="#5e8fc8" />
      <path d="M0 0h7v6H0zM13 0h7v6h-7zM7 6h6v6H7zM0 13h7v6H0z" fill="#24405f" />
      <path d="M7 0h6v6H7zM0 6h7v7H0z" fill="#4a78b0" />
      {plusBadge}
    </g>
  ),
  addMesh: <g stroke="#24405f" strokeWidth="1.200"><rect x="1.500" y="1.500" width="21" height="20" fill="#7ca5d3" /><path d="M1.500 13h21M12 1.500v20" fill="none" /><path d="M1.500 1.500L12 13M12 1.500L1.500 13M22.500 1.500L12 13M6.500 13v9M1.500 17h10" fill="none" strokeWidth=".8" />{plusBadge}</g>,
  addDelimited: <g><path d="M4 6c0-6 11-6 11 1 0 6-4 10-9 11l-.5-1.500C9 15 11 13 11 11c-4 1-7-2-7-5z" fill="#5e8fc8" stroke="#2f5680" />{plusBadge}</g>,
  addSpatialite: <g>{feather}{plusBadge}</g>,
  addVirtual: <g><rect x="1" y="1" width="21" height="21" rx="1" fill="#a9c1dc" stroke="#8a9cae" /><path d="M2 12L20 2h1v19H2z" fill="#e2eaf2" opacity=".6" />{vee}{plusBadge}</g>,
  addPostgis: <g><path d="M1 3c2-3 5-2 7-1 4-2 8-1 9 3 0 4-1 6-3 6v5c-1 2-3 2-4 0l-1-6-3 2C2 11 1 6 1 3z" fill="#5e8fc8" stroke="#24405f" strokeWidth="1.300" /><path d="M7 2c-2 3-2 7 0 9M13 3c1 3 1 6-1 8" stroke="#24405f" fill="none" />{plusBadge}</g>,
  addWms: <g>{earth}{plusBadge}</g>,
  addWcs: <g><circle cx="12" cy="11" r="10.800" fill="#5e8fc8" stroke="#24405f" strokeWidth="1.200" /><path d="M3 5h6v5H1zM14 5h7l2 5h-9zM9 11h6v5H9z" fill="#24405f" /><path d="M1 10.500h22M3 5h18M3 16.500h18M12 0c-6 6-6 16 0 22M12 0c6 6 6 16 0 22" stroke="#e4eef8" strokeWidth="1.100" fill="none" />{plusBadge}</g>,
  addWfs: <g><circle cx="12" cy="11" r="10.800" fill="#e9f1fa" stroke="#5e8fc8" strokeWidth="1.200" /><path d="M1 11h22M3 5h18M3 17h18M12 0v22" stroke="#8fb2da" fill="none" /><g transform="translate(1 1) scale(.85)">{vee}</g>{plusBadge}</g>,

  addSel: <g><rect x="1.500" y="2" width="18" height="18" fill="#f7f7f7" stroke="#777" strokeWidth="1.300" /><circle cx="19.500" cy="19.500" r="4" fill="#5a8c5a" /><path d="M19.500 17.500v4M17.500 19.500h4" stroke="#fff" strokeWidth="1.300" /></g>,
  filter: funnel,
  collapse: <g>{tree}<path d="M17 1l6 7h-3.500v14h-5V8H11z" fill="#5e8fc8" stroke="#2f5680" /></g>,
  expand: <g>{tree}<path d="M17 22l6-7h-3.500V2h-5v13H11z" fill="#5e8fc8" stroke="#2f5680" /></g>,
  brush: <g><path d="M1 8l8-5 6 7-5 6z" fill="#ffe04a" /><path d="M1 12l4-1 7 3-4 8C4 20 1 16 1 12z" fill="#e0707a" /><path d="M3 9l5-1 4 5-4 4z" fill="#7fb3e8" /><path d="M6 18l4-8 5 6-6 6z" fill="#d9542b" /><path d="M12 11l10-9 2 2-9 10z" fill="#d7a24c" stroke="#8a5f1c" strokeWidth=".7" /></g>,
  addGroup: <g fill="none" stroke="#777" strokeWidth="1.400"><path d="M2 8v14h10M6 5v13h10V5M10 2h9v12" /><path d="M9 6h6v8H9z" fill="#fff" stroke="#3a5f8c" /><rect x="14" y="14" width="10" height="10" rx="2" fill="#84b384" stroke="none" /><path d="M19 16v6M16 19h6" stroke="#fff" strokeWidth="2" /></g>,
  eye: <g><path d="M1 11C6 3 17 3 22 11 17 18 6 18 1 11z" fill="#f0f0f0" stroke="#777" strokeWidth="1.300" /><circle cx="12" cy="10.500" r="5" fill="#5e8fc8" stroke="#2f5680" /><circle cx="12" cy="10.500" r="2" fill="#111" /><path d="M15 19h9l-4.500 5z" fill="#555" /></g>,
  epsilon: <g><text x="0" y="15" fontSize="26" fontFamily="Liberation Serif" fontStyle="italic" fill="#666">ε</text><path d="M12 12h12v5l-3 2v5h-6v-5l-3-2z" fill="#999" /></g>,
  removeLayer: <g><rect x="1.500" y="2" width="18" height="18" fill="#f7f7f7" stroke="#777" strokeWidth="1.300" /><rect x="14" y="16" width="10" height="7" rx="2" fill="#e0484d" /><path d="M16 19.500h6" stroke="#fff" strokeWidth="1.600" /></g>,

  star: <path d="M12 .5l3.200 8 8.300.6-6.400 5.500 2 8.400L12 18.500 4.900 23l2-8.400L.5 9.100l8.300-.6z" fill="#fff25a" stroke="#d1a513" strokeWidth="1.300" />,
  home: <g><path d="M1.500 22V2.500h8l2 3h11V22z" fill="#f7f7f7" stroke="#888" strokeWidth="1.400" /><path d="M6 14l6-5.500 6 5.500h-2v5H8v-5z" fill="#fff" stroke="#222" strokeWidth="1.300" /></g>,
  folder: <path d="M1.500 22V2.500h8l2 3h11V22z" fill="#f2f2f2" stroke="#888" strokeWidth="1.500" />,
  poly: <path d="M1 6C1 2 4 2 7 4c3 1.500 6 1.500 9-.5 4-2 7-1 7 3v7c0 4-3 5-6 3-3-1.500-6-1-8 1-3 3-7 3-7.500 0C1.500 15 3 13 2.500 11 2 9 1 8 1 6z" fill="#dcdcdc" stroke="#8a8a8a" strokeWidth="1.400" />,
  rasterGrey: <g><path d="M3 3h19v13h-6v6H3z" fill="#b4cae6" /><path d="M3 3h5.500v5H3zM16.500 3H22v5h-5.500zM10 10h5.500v5.500H10zM3 17h5.500v5H3z" fill="#24364e" /><path d="M10 3h5v5.500h-5zM3 10h6v5H3z" fill="#8fa9cc" /><path d="M16.500 17H22v5h-5.500z" fill="#dbe6f4" /></g>,
  rasterBlue: <g><path d="M3 3h19v13h-6v6H3z" fill="#79ade0" /><path d="M3 3h5.500v5H3zM16.500 3H22v5h-5.500zM10 10h5.500v5.500H10zM3 17h5.500v5H3z" fill="#1f466f" /><path d="M10 3h5v5.500h-5zM3 10h6v5H3z" fill="#4f88c2" /><path d="M16.500 17H22v5h-5.500z" fill="#b4d2f0" /></g>,
  line: <g fill="none" stroke="#777" strokeWidth="1.300"><path d="M2.500 4L9 21l6-17h7" /><circle cx="2.500" cy="4" r="1.500" fill="#fff" /><circle cx="15" cy="3.500" r="1.500" fill="#fff" /><circle cx="22" cy="3.500" r="1.500" fill="#fff" /></g>,
};

function Glyph({ name, className = "size-6" }: { name: string; className?: string }) {
  return (
    <svg viewBox="0 0 24 24" className={`${className} shrink-0 overflow-visible`} fill="none" aria-hidden="true">
      {icons[name]}
    </svg>
  );
}

function Caret({ className = "text-[#4d4d4d]", up = false }: { className?: string; up?: boolean }) {
  return (
    <svg viewBox="0 0 8 5" className={`h-[5px] w-2 shrink-0 ${className}`} aria-hidden="true">
      <path d={up ? "M0 4.500h8L4 0z" : "M0 .5h8L4 5z"} fill="currentColor" />
    </svg>
  );
}

/* Tool button, with an optional menu caret beside it */
function Tool({ icon, label, dim, menu, active, corner }: { icon: string; label: string; dim?: boolean; menu?: boolean; active?: boolean; corner?: boolean }) {
  return (
    <button type="button" aria-label={label} title={label} className="relative flex h-8 shrink-0 items-center">
      <span className={`flex h-[31px] w-[33px] items-center justify-center ${active ? "rounded-sm border border-[#a9a9a9] bg-[#dcdcdc]" : ""} ${dim ? "opacity-35" : ""}`}>
        <Glyph name={icon} />
      </span>
      {menu && (
        <span className="flex w-3 justify-center">
          <Caret className={dim ? "text-[#9a9a9a]" : "text-[#4d4d4d]"} />
        </span>
      )}
      {corner && (
        <span className="absolute right-0.5 bottom-0.5">
          <Caret className="text-[#9a9a9a]" />
        </span>
      )}
    </button>
  );
}

function Grip({ className = "w-4" }: { className?: string }) {
  return (
    <span className={`flex shrink-0 justify-end pr-1 ${className}`} aria-hidden="true">
      <span className="h-[18px] w-1 bg-[radial-gradient(#b9b9b9_1px,transparent_1px)] bg-[length:3px_3px]" />
    </span>
  );
}

const Rule = () => <span className="mx-[3px] h-7 w-px shrink-0 bg-[#d4d4d4]" />;

const bar = "flex h-[39px] shrink-0 items-center overflow-hidden border-b border-[#b4b4b4] bg-linear-to-b from-[#fbfbfb] to-[#eeeeee]";
const field = "border border-[#adadad] rounded-xs bg-white";
const ui = "font-['Noto_Sans','Noto_Sans_CJK_SC',sans-serif]";
const song = "font-['Liberation_Mono','Noto_Sans_CJK_SC',monospace]";

const menus: [string, string][] = [
  ["项目", "J"], ["编辑", "E"], ["视图", "V"], ["图层", "L"], ["设置", "S"], ["插件", "P"], ["矢量", "O"],
  ["栅格", "R"], ["数据库", "D"], ["网络", "W"], ["网孔", "M"], ["处理", "C"], ["帮助", "H"],
];

function Spin({ label, value, className, dim }: { label: string; value: string; className: string; dim?: boolean }) {
  return (
    <span className={`flex shrink-0 items-stretch overflow-hidden ${field} ${className} ${dim ? "bg-[#efefef] text-[#777]" : ""}`}>
      <input aria-label={label} defaultValue={value} className={`min-w-0 flex-1 bg-transparent px-1 text-[10px] outline-none ${song}`} />
      <span className="flex w-[13px] flex-col items-center justify-center gap-[3px] border-l border-[#adadad] bg-[#fafafa]">
        <button type="button" aria-label={`${label} +`} className="flex"><Caret up className={dim ? "text-[#999]" : "text-[#4d4d4d]"} /></button>
        <button type="button" aria-label={`${label} -`} className="flex"><Caret className={dim ? "text-[#999]" : "text-[#4d4d4d]"} /></button>
      </span>
    </span>
  );
}

function Toolbars() {
  return (
    <>
      <div className={bar} role="toolbar" aria-label="项目与地图导航">
        <Grip className="w-3" />
        <Tool icon="new" label="新建" />
        <Tool icon="open" label="打开" />
        <Tool icon="save" label="保存" />
        <Tool icon="newLayout" label="新建打印布局" />
        <Tool icon="layouts" label="布局管理器" />
        <Tool icon="style" label="样式管理器" />
        <Grip />
        <Tool icon="hand" label="平移地图" active />
        <Tool icon="pan" label="平移至所选" />
        <Tool icon="zoomIn" label="放大" />
        <Tool icon="zoomOut" label="缩小" />
        <Tool icon="zoomFull" label="全图显示" />
        <Tool icon="zoomSel" label="缩放至所选" dim />
        <Tool icon="zoomLayer" label="缩放至图层" />
        <Tool icon="zoomNative" label="缩放至原始分辨率" />
        <Tool icon="zoomLast" label="上一视图" />
        <Tool icon="zoomNext" label="下一视图" dim />
        <Tool icon="mapView" label="新建地图视图" />
        <Tool icon="bookNew" label="新建书签" />
        <Tool icon="bookmarks" label="显示书签" />
        <Tool icon="refresh" label="刷新" />
        <Grip />
        <Tool icon="identify" label="识别要素" />
        <Tool icon="action" label="运行动作" dim menu />
        <Tool icon="select" label="选择要素" dim menu />
        <Tool icon="selectForm" label="按值选择" dim menu />
        <Tool icon="deselect" label="取消选择" />
        <Tool icon="table" label="打开属性表" dim />
        <Tool icon="abacus" label="字段计算器" dim />
        <Tool icon="gear" label="工具箱" />
        <Tool icon="sigma" label="统计摘要" />
        <Tool icon="measure" label="测量" menu />
        <Tool icon="mapTip" label="地图提示" />
        <Tool icon="textNote" label="文字注记" menu />
      </div>

      <div className={bar} role="toolbar" aria-label="数据源与数字化">
        <Grip className="w-3" />
        <Tool icon="dataSource" label="数据源管理器" />
        <Tool icon="geopackage" label="新建 GeoPackage 图层" />
        <Tool icon="shapeNew" label="新建 Shapefile 图层" />
        <Tool icon="spatialite" label="新建 SpatiaLite 图层" />
        <Tool icon="memory" label="新建临时图层" />
        <Rule />
        <Tool icon="virtual" label="新建虚拟图层" />
        <Grip />
        <Tool icon="pencils" label="当前编辑" dim corner />
        <Tool icon="pencil" label="切换编辑" dim />
        <Tool icon="saveEdits" label="保存编辑" dim />
        <Tool icon="addFeature" label="添加要素" dim />
        <Tool icon="vertexTool" label="节点工具" dim menu />
        <Tool icon="multiEdit" label="修改属性" dim />
        <Tool icon="trash" label="删除所选" dim />
        <Tool icon="cut" label="剪切" dim />
        <Tool icon="copy" label="复制" dim />
        <Tool icon="paste" label="粘贴" dim />
        <Tool icon="undo" label="撤销" dim />
        <Tool icon="redo" label="重做" dim />
        <Grip />
        <Tool icon="label" label="图层标注选项" dim />
        <Tool icon="diagram" label="图层图表选项" dim />
        <Rule />
        <Tool icon="labelPin" label="高亮固定标注" />
        <Tool icon="labelRed" label="显示未放置标注" />
        <Rule />
        <Tool icon="labelPin2" label="固定标注" dim />
        <Tool icon="labelEye" label="显示隐藏标注" dim />
        <Tool icon="labelMove" label="移动标注" dim />
        <Tool icon="labelTurn" label="旋转标注" dim />
        <Tool icon="labelEdit" label="更改标注" dim />
        <Grip className="w-9" />
        <Tool icon="db" label="数据库管理器" />
        <Grip />
        <Tool icon="globePlus" label="添加图层服务" />
        <Tool icon="globeFind" label="搜索图层服务" />
        <Tool icon="metasearch" label="MetaSearch" />
        <Grip />
        <Tool icon="python" label="Python 控制台" />
        <Grip />
        <Tool icon="help" label="帮助" />
        <Grip className="w-[42px]" />
      </div>

      <div className={bar} role="toolbar" aria-label="高级数字化与捕捉">
        <Grip className="w-3" />
        <Tool icon="cad" label="高级数字化工具" dim />
        <Tool icon="moveFeature" label="移动要素" dim menu />
        <Tool icon="rotateFeature" label="旋转要素" dim />
        <Tool icon="scaleFeature" label="简化要素" dim />
        <Tool icon="addRing" label="添加环" dim />
        <Tool icon="addPart" label="添加部件" dim />
        <Tool icon="fillRing" label="填充环" dim />
        <Tool icon="delRing" label="删除环" dim />
        <Tool icon="delPart" label="删除部件" dim />
        <Tool icon="reshape" label="重塑要素" dim />
        <Tool icon="offset" label="偏移曲线" dim />
        <Tool icon="reverse" label="反转线" dim />
        <Tool icon="trim" label="修剪延伸" dim />
        <Tool icon="split" label="分割要素" dim />
        <Tool icon="splitParts" label="分割部件" dim />
        <Tool icon="merge" label="合并要素" dim />
        <Tool icon="mergeAttr" label="合并属性" dim />
        <Tool icon="rotateSym" label="旋转点符号" dim menu />
        <Grip />
        <Tool icon="histLocal" label="局部累积拉伸" />
        <Tool icon="histLocalWide" label="全局累积拉伸" />
        <Tool icon="hist" label="局部直方图拉伸" />
        <Tool icon="histWide" label="全局直方图拉伸" />
        <Tool icon="brighter" label="增加亮度" />
        <Tool icon="darker" label="降低亮度" />
        <Tool icon="contrastUp" label="增加对比度" />
        <Tool icon="contrastDown" label="降低对比度" />
        <Grip className="w-[425px]" />
        <Tool icon="magnet" label="启用捕捉" />
        <Tool icon="snapVertex" label="捕捉图层" dim corner />
        <Tool icon="snapDots" label="捕捉类型" dim corner />
        <Spin label="容差" value="12" className="h-6 w-[84px]" dim />
        <span className="relative ml-0.5 flex shrink-0 items-center">
          <select aria-label="单位" className={`h-[26px] w-16 appearance-none rounded-xs border border-[#c4c4c4] bg-[#f8f8f8] pl-1 text-xs text-[#777] ${ui}`}>
            <option>像素</option>
          </select>
          <span className="pointer-events-none absolute right-[7px]"><Caret className="text-[#999]" /></span>
        </span>
        <Tool icon="topo" label="拓扑编辑" />
        <Tool icon="intersect" label="交点捕捉" dim />
        <Tool icon="selfSnap" label="自捕捉" dim menu />
      </div>

      <div className={bar} role="toolbar" aria-label="形状与插件">
        <Grip className="w-3" />
        <Tool icon="arc" label="圆弧" dim menu />
        <Tool icon="circle" label="圆" dim menu />
        <Tool icon="ellipse" label="椭圆" dim menu />
        <Tool icon="rectangle" label="矩形" dim menu />
        <Tool icon="polygon" label="正多边形" dim menu />
        <Grip />
        <Tool icon="osmSearch" label="搜索" />
        <Tool icon="osmMap" label="地图下载" />
        <Grip />
        <Tool icon="cube" label="三维" />
        <Tool icon="cloud" label="上传" />
        <Grip />
        <Tool icon="floodFolder" label="工程" />
        <Tool icon="floodData" label="数据" />
        <Tool icon="floodHouse" label="损失" />
        <Tool icon="floodRun" label="疏散" />
        <Tool icon="floodGear" label="设置" />
        <Tool icon="floodHelp" label="说明" />
      </div>
    </>
  );
}

const sideTools: [string, string, boolean][] = [
  ["addVector", "添加矢量图层", false],
  ["addRaster", "添加栅格图层", false],
  ["addMesh", "添加网孔图层", false],
  ["addDelimited", "添加分隔文本图层", false],
  ["addSpatialite", "添加 SpatiaLite 图层", false],
  ["addVirtual", "添加虚拟图层", false],
  ["addPostgis", "添加 PostGIS 图层", true],
  ["addWms", "添加 WMS 图层", true],
  ["addWcs", "添加 WCS 图层", false],
  ["addWfs", "添加 WFS 图层", true],
  ["memory", "新建临时图层", true],
];

function SideBar() {
  return (
    <div className="flex w-[51px] shrink-0 flex-col bg-linear-to-r from-[#fbfbfb] to-[#eeeeee]" role="toolbar" aria-label="管理图层">
      <span className="mt-1 mb-1 ml-[19px] h-1 w-4 bg-[radial-gradient(#b9b9b9_1px,transparent_1px)] bg-[length:3px_3px]" />
      {sideTools.map(([icon, label, menu]) => (
        <button key={icon} type="button" aria-label={label} className="flex h-8 items-center pl-2">
          <Glyph name={icon} />
          {menu && <span className="ml-1.5 flex"><Caret /></span>}
        </button>
      ))}
    </div>
  );
}

function PanelTitle({ children }: { children: string }) {
  return (
    <div className="flex h-[18px] items-center pr-0.5 pl-1">
      <h2 className="flex-1 text-xs leading-4">{children}</h2>
      <button type="button" aria-label={`${children}浮动`} className="mr-[3px] flex size-[11px] items-center justify-center">
        <svg viewBox="0 0 11 11" className="size-[11px]" fill="none" stroke="#555"><rect x=".5" y=".5" width="10" height="10" rx="1.500" /><path d="M4.500 2.500h4v4h-4zM2.500 4.500h4v4h-4z" /></svg>
      </button>
      <button type="button" aria-label={`${children}关闭`} className="flex size-[11px] items-center justify-center">
        <svg viewBox="0 0 11 11" className="size-[11px]" fill="none" stroke="#444"><rect x=".5" y=".5" width="10" height="10" rx="1.500" /><path d="M3 3l5 5M8 3l-5 5" strokeWidth="1.800" /></svg>
      </button>
    </div>
  );
}

function PanelTool({ icon, label, dim, menu }: { icon: string; label: string; dim?: boolean; menu?: boolean }) {
  return (
    <button type="button" aria-label={label} className="flex h-7 items-center">
      <span className={`flex w-[25px] justify-center ${dim ? "opacity-40" : ""}`}><Glyph name={icon} className="size-[15px]" /></span>
      {menu && <span className="flex w-3 justify-center"><Caret className="text-[#9a9a9a]" /></span>}
    </button>
  );
}

function Twisty({ open, label }: { open?: boolean; label: string }) {
  return (
    <button type="button" aria-label={label} className="flex w-[23px] shrink-0 justify-center pr-[3px]">
      <svg viewBox="0 0 8 8" className="size-2" aria-hidden="true">
        <path d={open ? "M0 2h8L4 6z" : "M2 0v8l4-4z"} fill="#505050" />
      </svg>
    </button>
  );
}

const places: [string, string][] = [
  ["star", "收藏夹"], ["bookmarks", "Spatial Bookmarks"], ["home", "主目录"],
  ["folder", "C:\\"], ["folder", "D:\\"], ["folder", "E:\\"], ["folder", "F:\\"], ["folder", "G:\\"], ["folder", "H:\\"],
  ["folder", "I:\\"], ["folder", "J:\\"], ["folder", "K:\\"], ["folder", "L:\\"], ["folder", "M:\\"],
];

function BrowserPanel() {
  return (
    <section className="flex shrink-0 flex-col pt-px" aria-label="浏览">
      <PanelTitle>浏览</PanelTitle>
      <div className="flex h-[31px] items-center pl-1">
        <PanelTool icon="addSel" label="添加所选图层" />
        <PanelTool icon="refresh" label="刷新" />
        <PanelTool icon="filter" label="过滤" />
        <PanelTool icon="collapse" label="全部折叠" />
        <PanelTool icon="info" label="属性" />
      </div>
      <div className="flex h-[255px] overflow-hidden border border-[#b4b4b4] bg-white">
        <ul className="min-w-0 flex-1 overflow-hidden text-xs">
          {places.map(([icon, name], i) => (
            <li key={name} className="flex h-[19px] items-center">
              <Twisty label={`展开 ${name}`} />
              <Glyph name={icon} className="ml-px size-[15px]" />
              <span className={`ml-[3px] flex h-[18px] items-center rounded-xs border px-0.5 ${i === 0 ? "w-[221px] border-[#b8d6ee] bg-linear-to-b from-[#f6fbff] to-[#e9f5ff]" : "border-transparent"}`}>{name}</span>
            </li>
          ))}
        </ul>
        <div className="flex w-[14px] shrink-0 flex-col border-l border-[#c0c0c0] bg-[#e6e6e6]">
          <button type="button" aria-label="向上滚动" className="flex h-[14px] items-center justify-center border-b border-[#c0c0c0] bg-[#fafafa]"><Caret up /></button>
          <div className="h-[37px] border-b border-[#c0c0c0] bg-[#fafafa]" />
          <div className="flex-1" />
          <button type="button" aria-label="向下滚动" className="flex h-[14px] items-center justify-center border-t border-[#c0c0c0] bg-[#fafafa]"><Caret /></button>
        </div>
      </div>
    </section>
  );
}

function Tick({ on, label }: { on: boolean; label: string }) {
  return (
    <label className="relative flex size-[14px] shrink-0">
      <input type="checkbox" defaultChecked={on} aria-label={label} className="peer size-[14px] appearance-none border border-[#b8b8b8] bg-white" />
      <svg viewBox="0 0 14 14" className="pointer-events-none absolute inset-0 hidden size-[14px] peer-checked:block" fill="none">
        <path d="M4 6.500l2.200 4L10.500 3" stroke="#111" strokeWidth="2" />
      </svg>
    </label>
  );
}

type Layer = { name: string; icon: string; on?: boolean; state?: "open" | "closed"; ramp?: [string, string][]; rules?: [string, string][] };

const layers: Layer[] = [
  { name: "CensusBlocks", icon: "poly", state: "closed" },
  {
    name: "PercentDamage_1_T25", icon: "rasterGrey", state: "open",
    ramp: [["#2b83ba", "0"], ["#abdda4", "0.205"], ["#ffffbf", "0.41"], ["#fdae61", "0.615"], ["#d7191c", "0.82"]],
  },
  {
    name: "Damage_1_T25", icon: "rasterBlue", on: true, state: "open",
    ramp: [["#2b83ba", "0"], ["#abdda4", "0"], ["#ffffbf", "0"], ["#b7dedb", "0"], ["#d7191c", "5.04322801208497"]],
  },
  {
    name: "InfrasctrucLines", icon: "line", state: "open",
    rules: [["#ff5500", "Fast transit roads and associated land"], ["#ffa37f", "Other roads and associated land"], ["#6b6b6b", "Railways and associated land"], ["#d68e73", ""]],
  },
  { name: "PropertyPoly", icon: "poly", state: "closed" },
  { name: "WarningTime", icon: "" },
  { name: "Max_H_S0Q25", icon: "rasterGrey", state: "closed" },
  { name: "Max_V_S0Q25", icon: "rasterGrey", state: "closed" },
];

function LayersPanel() {
  return (
    <section className="flex min-h-0 flex-1 flex-col" aria-label="图层">
      <PanelTitle>图层</PanelTitle>
      <div className="flex h-[31px] items-center pl-1">
        <PanelTool icon="brush" label="图层样式" />
        <PanelTool icon="addGroup" label="添加组" />
        <PanelTool icon="eye" label="地图主题" />
        <PanelTool icon="filter" label="过滤图例" />
        <PanelTool icon="epsilon" label="按表达式过滤" dim menu />
        <PanelTool icon="expand" label="全部展开" />
        <PanelTool icon="collapse" label="全部折叠" />
        <PanelTool icon="removeLayer" label="移除图层" />
      </div>
      <ul className="min-h-0 flex-1 overflow-hidden border border-[#b4b4b4] bg-white text-xs">
        {layers.map((l) => (
          <li key={l.name}>
            <div className={`flex h-[19px] items-center pr-px ${l.on ? "bg-[#f0f0f0]" : ""}`}>
              {l.state ? <Twisty open={l.state === "open"} label={`展开 ${l.name}`} /> : <span className="w-[23px]" />}
              <Tick on={!!l.on} label={l.name} />
              {l.icon ? <Glyph name={l.icon} className="mx-1.5 size-4" /> : <span className="mx-1.5 size-4 border border-[#4f6f42] bg-[#83b56f]" />}
              <span className={`flex-1 font-bold ${l.on ? "text-xs text-black underline" : "text-[13px] text-[#808080] italic"}`}>{l.name}</span>
              <span className="h-[17px] w-[9px] bg-[#e0e0e0]" />
            </div>
            {l.ramp && (
              <ul>
                {l.ramp.map(([color, value], i) => (
                  <li key={i} className="flex h-[19px] items-center pl-[43px]">
                    <span className="size-4" style={{ backgroundColor: color }} />
                    <span className="ml-1.5">{value}</span>
                  </li>
                ))}
              </ul>
            )}
            {l.rules && (
              <ul>
                {l.rules.map(([color, text], i) => (
                  <li key={i} className="flex h-5 items-center pl-[43px]">
                    <Tick on label={text || "其他"} />
                    <span className="mx-1.5 h-[5px] w-[18px]" style={{ backgroundColor: color }} />
                    <span className="whitespace-nowrap">{text}</span>
                  </li>
                ))}
              </ul>
            )}
          </li>
        ))}
      </ul>
    </section>
  );
}

/* Flood extent: upper river valley and the wide lower plain */
const westExtent =
  "M37 397L55 397 60 402 70 404 75 409 90 409 100 405 112 403 114 398 114 376 112 373 116 353 122 362 130 364 136 375 145 377 166 376 185 358 195 340 205 333 235 321 250 316 285 316 292 305 318 297 355 298 362 290 372 286 385 270 402 256 420 253 425 248 433 246 433 222 443 214 452 203 500 202 512 193 530 180 560 180 562 165 568 160 590 158 598 150 608 150 615 160 625 157 632 142 645 134 690 136 705 125 712 120 712 98 722 97 728 90 742 90 750 94 780 96 825 97 850 87 858 84 870 70 882 60 903 60 910 68 919 68 919 54 922 54 922 68 935 74 970 74 985 69 1000 68 1008 63 1025 63 1035 71 1062 76 1085 79 1100 75 1122 74 1130 69 1142 69 1150 74 1185 76 1210 85 1225 98 1245 120 1252 140 1258 149 1295 154 1312 168 1330 182 1350 191 1380 194 1445 195 1455 200 1470 210 1490 230V395L1470 393 1455 397 1455 404 1442 404 1437 398 1435 385 1425 378 1418 368 1410 350 1395 345 1378 330 1365 303 1340 295 1320 290 1315 284 1315 258 1300 253 1285 250 1268 254 1242 253 1235 237 1230 232 1230 224 1215 220 1213 210 1198 209 1190 206 1160 206 1140 207 1122 214 1103 215 1100 190 1090 180 1075 171 1050 168 1030 167 1015 158 1005 140 990 124 983 112 970 105 925 102 905 108 898 118 890 113 865 115 858 125 850 135 842 160 842 230 844 233 815 232 800 227 780 222 760 214 745 207 720 208 695 208 680 214 655 219 625 221 605 222 580 224 562 226 545 237 515 250 508 262 495 268 480 276 460 280 430 284 410 290 398 297 390 308 387 314 382 305 370 314 352 318 335 320 300 320 290 328 240 332 215 338 205 345 195 360 180 370 165 381 152 388 140 382 133 374 122 372 122 400 115 408 95 417 75 416 65 407 38 403Z" +
  "M576 168L620 163 630 158 640 152 663 156 690 157 705 148 725 139 760 136 795 141 802 155 815 178 825 190 832 210 836 226 815 226 795 222 770 214 755 208 745 202 690 205 665 213 640 215 600 215 597 202 580 198 575 190Z" +
  "M549 187h10v12l-6 6-4-2zM503 212h4v6h-4z" +
  "M1382 258L1392 260 1396 268 1410 275 1415 288 1430 298 1440 315 1437 335 1443 350 1430 352 1408 348 1405 320 1407 295 1400 290 1388 282Z" +
  "M1445 318L1458 322 1462 345 1470 350 1475 365 1462 365 1454 356 1457 335ZM1472 325l4 22-3-4zM1478 340L1488 378 1475 375ZM1370 234h8v5h-8z";
const eastExtent =
  "M60 -10L77 0 92 10 115 23 135 25 165 42 185 58 190 75 208 96 218 88 222 74 238 72 238 56 255 64 290 68 305 78 328 85 338 98 372 104 372 91 385 94 405 92 430 98 450 103 493 102 493 115 497 120 490 133 450 135 438 125 430 112 405 108 388 110 380 118 385 128 392 124 402 125 402 138 414 145 405 160 390 163 400 168 440 166 449 172 445 190 447 208 468 212 478 230 492 232 501 243 500 260 487 267 497 272 502 286 490 296 482 300 487 318 517 319 525 338 540 355 552 373 568 378 583 393 585 407 600 420 625 438 660 448 690 455 720 467 740 468 765 485 785 500 802 508 800 520 830 530 855 534 888 529 898 550 910 572 930 574 945 590 950 605 970 620 1000 635 1000 645 1030 660 1060 674 1140 678 1165 687 1180 677 1208 679 1235 683 1260 693 1268 680 1275 675 1283 688 1285 702 1295 712 1300 722 1313 735 1325 740 1330 750 1357 770 1362 795 1372 825 1365 835 1363 850 1375 872 1390 890 1410 900 1428 903 1430 920 1448 934 1430 945 1420 965 1412 976 1400 968 1388 962 1375 945 1365 927 1355 935 1338 945 1315 963 1280 988 1273 1000 1278 1022 1262 1028 1252 1045 1240 1080 1242 1100 1238 1112 1250 1128 1264 1138 1235 1160 1200 1168 1130 1178 1085 1188 1060 1195 1050 1215 1044 1250 1050 1256 1035 1253 1008 1250 1000 1234 985 1230 965 1212 940 1197 907 1177 895 1160 893 1133 880 1128 877 1110 850 1097 845 1080 838 1066 856 1062 862 1043 882 1030 890 1005 885 985 885 970 875 950 845 930 820 915 785 906 745 917 710 919 665 913 655 895 615 888 605 870 597 835 562 825 540 800 495 792 480 768 408 762 390 745 390 710 378 683 350 680 335 665 300 648 290 632 294 608 285 618 272 612 264 585 265 545 250 530 240 495 236 490 235 435 225 418 220 420 218 452 215 452 215 408 207 400 203 385 198 395 197 360 202 325 198 320 192 295 180 283 172 286 172 265 155 258 143 230 135 200 120 190 98 186 85 181 70 185 62 160 60 145Z" +
  "M374 518h8v13h-8zM373 627l9 12v10l-8 6zM450 712l8-2 3 10 12 5 8-4 14-1 2 15 10 6h-28l-16-12-11-6zM600 467h5v7h-5zM606 489l32 3 2 20 5 15h-10l-10-16-6-14zM345 143h4v4h-4zM372 152h8v4h-8zM356 168h8v3h-8z";

function MapCanvas() {
  return (
    <main className="min-w-0 flex-1 border border-[#b4b4b4] bg-white">
      <svg viewBox="400 202 1519 929" className="block h-full w-full" role="img" aria-label="淹没范围地图" fill="none" shapeRendering="crispEdges">
        <g transform="translate(440 420) scale(.45918 .33333)">
          <path d={westExtent} fill="#c5e3e1" fillRule="evenodd" />
          <path d="M1068 79h22l30 6M1150 88h25l20 12 15 10 35 35 10 15M1385 222l5-2h40M853 86l14 20M385 311l7-5M92 418l26-12" stroke="#d9696c" vectorEffect="non-scaling-stroke" />
          <path d="M1120 85l30 3M1255 160l20 25 25 28 35 9h50M797 134l23-7M418 287l40-24M1427 350v33" stroke="#d39c9b" vectorEffect="non-scaling-stroke" />
          <path d="M770 139l27-5M820 127l50-18 12 6M458 263l57-33 30-18 25-7 27-3" stroke="#c9bcbb" vectorEffect="non-scaling-stroke" />
        </g>
        <g transform="translate(1100 500) scale(.39541 .33333)">
          <path d={eastExtent} fill="#c5e3e1" fillRule="evenodd" />
          <path d="M1285 688l-6 22-3 55-2 85 2 138" stroke="#d39c9b" vectorEffect="non-scaling-stroke" />
          <path d="M1314 738v227M1314 758h24M1314 802h52M1314 853h52M1314 895h86M1314 944h28M1375 947h50" stroke="#cbb9b8" vectorEffect="non-scaling-stroke" />
        </g>
      </svg>
    </main>
  );
}

function StatusBar() {
  return (
    <footer className="flex h-[28px] shrink-0 items-center bg-[#efefef] pr-2 pl-1 text-[11px]">
      <label className={`flex h-[22px] w-[200px] items-center gap-2 px-2 ${field}`}>
        <svg viewBox="0 0 12 12" className="size-3 shrink-0" fill="none" stroke="#888"><circle cx="5" cy="5" r="4" strokeWidth="1.300" /><path d="M8 8l3.500 3.500" strokeWidth="1.700" /></svg>
        <input aria-label="定位" placeholder="键入以定位(Ctrl+K)" className="min-w-0 flex-1 bg-transparent font-['Liberation_Serif','Noto_Sans_CJK_SC',serif] text-xs outline-none placeholder:text-[#808080]" />
      </label>
      <span className="flex-1" />
      <label htmlFor="coord" className="mr-1">坐标</label>
      <input id="coord" defaultValue="6703,8409" className={`h-[22px] w-[82px] text-center text-[10px] ${field} ${song}`} />
      <button type="button" aria-label="切换范围显示" className="mr-3.5 ml-[3px]">
        <svg viewBox="0 0 16 16" className="size-4" fill="none" stroke="#333"><path d="M1 3l3-2 8 8c3 3 0 7-3 5L1 6z" fill="#eee" strokeWidth="1.200" /><path d="M3 3l8 9M6 2l7 7M10 3l4 1M11 1v4" strokeWidth="1.300" /><circle cx="10.500" cy="11.500" r="2" /></svg>
      </button>
      <label htmlFor="scale" className="mr-0.5">比例尺</label>
      <span className="relative flex items-center">
        <select id="scale" className={`h-[22px] w-[82px] appearance-none pl-[3px] text-[10px] ${field} ${song}`}>
          <option>1:39412</option>
        </select>
        <span className="pointer-events-none absolute right-0 flex h-[22px] w-[21px] items-center justify-center border-l border-[#adadad]"><Caret /></span>
      </span>
      <button type="button" aria-label="锁定比例" className="mr-[7px] ml-3">
        <svg viewBox="0 0 14 16" className="h-4 w-[14px]" fill="none"><path d="M3.500 8V5c0-5 7-5 7 0v3" stroke="#888" strokeWidth="1.800" /><rect x="1" y="7" width="12" height="8.500" rx="1" fill="#5a5a5a" /></svg>
      </button>
      <span className="mr-1">放大镜</span>
      <Spin label="放大镜" value="100%" className="h-[22px] w-[93px]" />
      <span className="mr-2 ml-2.5">旋转角度</span>
      <Spin label="旋转角度" value="0.0°" className="h-[22px] w-[89px]" />
      <span className="mr-1.5 ml-1.5 flex"><Tick on label="渲染" /></span>
      <span>渲染</span>
      <button type="button" className={`ml-4 flex items-center gap-1 text-[10px] ${song}`}>
        <svg viewBox="0 0 16 16" className="size-[15px]" fill="none" stroke="#777"><path d="M8 1l5 2 2.500 4-2.500 4-5 3-5-3L.5 7 3 3z" fill="#bbb" /><path d="M1 7h14M3 3.500h10M3 11h10M8 1v14M5 3v8M11 3v8" /></svg>
        EPSG:32632
      </button>
      <button type="button" aria-label="消息" className="ml-6">
        <svg viewBox="0 0 16 16" className="size-4"><path d="M8 1c9 0 10 9 4 11v3l-4-2.500C-2 13-2 1 8 1z" fill="#555" /><path d="M4 7h1.500M7.300 7h1.500M10.600 7h1.500" stroke="#fff" strokeWidth="1.600" /></svg>
      </button>
    </footer>
  );
}

export default function App() {
  return (
    <div className={`flex h-screen flex-col overflow-hidden bg-[#efefef] text-black ${ui}`}>
      <header className="flex h-[23px] shrink-0 items-center bg-white pr-0.5 pl-0.5">
        <svg viewBox="0 0 18 18" className="size-[17px]" fill="none" aria-hidden="true">
          <circle cx="8.500" cy="8.500" r="6.300" stroke="#6aa82e" strokeWidth="3.800" />
          <path d="M8.500 8.500h4l4.500 5v3.500h-3l-5.500-5z" fill="#3f7d1e" />
          <path d="M8 8l4.500.5-4 4z" fill="#f0b323" />
        </svg>
        <h1 className="ml-1 flex-1 text-xs">*未命名的项目 - QGIS</h1>
        <button type="button" aria-label="最小化" className="flex h-full w-[46px] items-center justify-center"><svg viewBox="0 0 10 10" className="size-[10px]"><path d="M0 5.500h10" stroke="#000" /></svg></button>
        <button type="button" aria-label="还原" className="flex h-full w-[46px] items-center justify-center"><svg viewBox="0 0 10 10" className="size-[10px]" fill="none" stroke="#000"><path d="M.5 2.500h7v7h-7zM2.500 2.500v-2h7v7h-2" /></svg></button>
        <button type="button" aria-label="关闭" className="flex h-full w-[46px] items-center justify-center"><svg viewBox="0 0 10 10" className="size-[10px]" stroke="#000"><path d="M0 0l10 10M10 0L0 10" /></svg></button>
      </header>
      <nav className="flex h-[22px] shrink-0 items-center border-b border-[#d4d4d4] pl-0.5 text-xs">
        {menus.map(([name, key]) => (
          <button key={name} type="button" className="pr-[7px] pl-2 whitespace-nowrap">
            {name}(<u>{key}</u>)
          </button>
        ))}
      </nav>
      <Toolbars />
      <div className="flex min-h-0 flex-1">
        <SideBar />
        <div className="flex w-[341px] shrink-0 flex-col border-l border-[#b4b4b4]">
          <BrowserPanel />
          <div className="flex h-[7px] shrink-0 items-center justify-center">
            <span className="h-0.5 w-4 bg-[radial-gradient(#b9b9b9_1px,transparent_1px)] bg-[length:3px_3px]" />
          </div>
          <LayersPanel />
        </div>
        <div className="flex w-[6px] shrink-0 items-center justify-center">
          <span className="h-4 w-0.5 bg-[radial-gradient(#b9b9b9_1px,transparent_1px)] bg-[length:3px_3px]" />
        </div>
        <MapCanvas />
      </div>
      <StatusBar />
    </div>
  );
}
